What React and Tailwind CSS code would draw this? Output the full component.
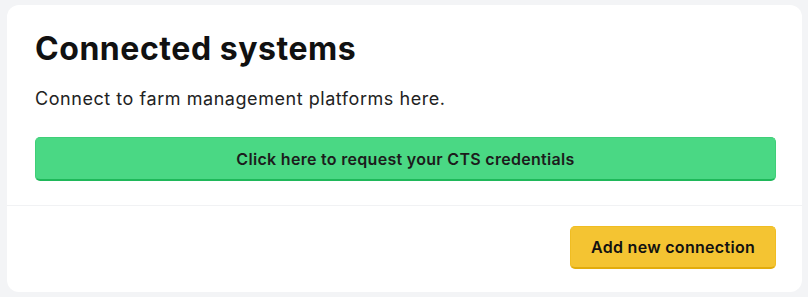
export default function App() {
  return (
    <div className="min-h-[297px] bg-[#f3f4f6] pt-[5px] pl-[7px] pr-[6px] pb-[5px]" style={{ fontFamily: 'Inter, "Noto Sans", sans-serif' }}>
      <div className="bg-white rounded-xl">
        <div className="pt-6 pb-6 pl-7 pr-[26px] border-b border-[#f1f2f4]">
          <h2 className="text-[32px] leading-10 font-bold tracking-[0.55px] text-[#111111]">Connected systems</h2>
          <p className="mt-4 text-[18px] leading-7 tracking-[0.55px] text-[#222222]">
            Connect to farm management platforms here.
          </p>
          <button className="mt-6 w-full h-[44px] rounded-[5px] bg-[#4ad884] border border-[#3fcf78] border-b-2 border-b-[#1fb85a] text-[16px] font-semibold tracking-[0.3px] text-[#1c1c1c]">
            Click here to request your CTS credentials
          </button>
        </div>
        <div className="flex justify-end pt-5 pb-[23px] pl-7 pr-[26px]">
          <button className="w-[206px] h-[43px] rounded-[5px] bg-[#f4c432] border border-[#f0bd22] border-b-2 border-b-[#e2ac0c] text-[16px] font-semibold tracking-[0.3px] text-[#111111]">
            Add new connection
          </button>
        </div>
      </div>
    </div>
  );
}
